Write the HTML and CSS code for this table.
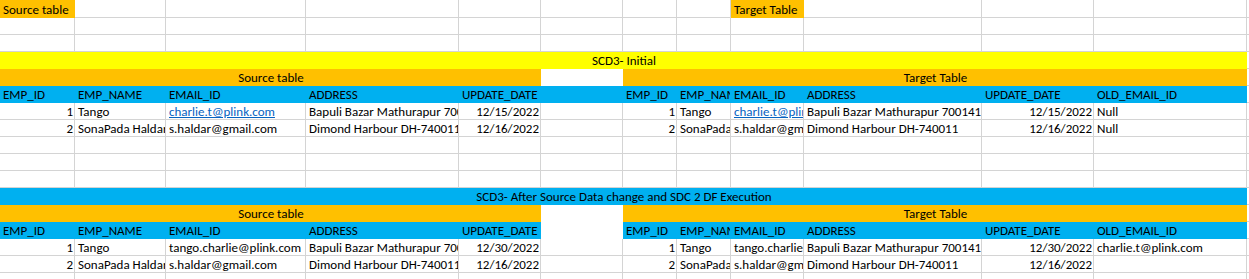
FILE: index.html
```html
<!DOCTYPE html>
<html lang="en">
<head>
<meta charset="utf-8">
<title>SCD3 sheet</title>
<link rel="stylesheet" href="styles.css">
</head>
<body>
<div class="sheet">
  <!-- row 1 -->
  <div class="c or">Source table</div><div class="c"></div><div class="c"></div><div class="c"></div><div class="c"></div><div class="c"></div><div class="c"></div><div class="c"></div>
  <div class="c or">Target Table</div><div class="c"></div><div class="c"></div><div class="c"></div><div class="c"></div>
  <!-- row 2 -->
  <div class="c"></div><div class="c"></div><div class="c"></div><div class="c"></div><div class="c"></div><div class="c"></div><div class="c"></div><div class="c"></div><div class="c"></div><div class="c"></div><div class="c"></div><div class="c"></div><div class="c"></div>
  <!-- row 3 -->
  <div class="c"></div><div class="c"></div><div class="c"></div><div class="c"></div><div class="c"></div><div class="c"></div><div class="c"></div><div class="c"></div><div class="c"></div><div class="c"></div><div class="c"></div><div class="c"></div><div class="c"></div>
  <!-- row 4 -->
  <div class="c ye span12 ctr">SCD3- Initial</div><div class="c"></div>
  <!-- row 5 -->
  <div class="c or span5 ctr">Source table</div><div class="c wf"></div><div class="c or span6 ctr">Target Table</div><div class="c"></div>
  <!-- row 6 -->
  <div class="c bl">EMP_ID</div><div class="c bl">EMP_NAME</div><div class="c bl">EMAIL_ID</div><div class="c bl">ADDRESS</div><div class="c bl">UPDATE_DATE</div><div class="c bl"></div>
  <div class="c bl">EMP_ID</div><div class="c bl">EMP_NAME</div><div class="c bl">EMAIL_ID</div><div class="c bl">ADDRESS</div><div class="c bl">UPDATE_DATE</div><div class="c bl">OLD_EMAIL_ID</div><div class="c"></div>
  <!-- row 7 -->
  <div class="c num">1</div><div class="c">Tango</div><div class="c"><span class="link">charlie.t@plink.com</span></div><div class="c">Bapuli Bazar Mathurapur 700141</div><div class="c num">12/15/2022</div><div class="c"></div>
  <div class="c num">1</div><div class="c">Tango</div><div class="c"><span class="link">charlie.t@plink.com</span></div><div class="c">Bapuli Bazar Mathurapur 700141</div><div class="c num">12/15/2022</div><div class="c">Null</div><div class="c"></div>
  <!-- row 8 -->
  <div class="c num">2</div><div class="c">SonaPada Haldar</div><div class="c">s.haldar@gmail.com</div><div class="c">Dimond Harbour DH-740011</div><div class="c num">12/16/2022</div><div class="c"></div>
  <div class="c num">2</div><div class="c">SonaPada Haldar</div><div class="c">s.haldar@gmail.com</div><div class="c">Dimond Harbour DH-740011</div><div class="c num">12/16/2022</div><div class="c">Null</div><div class="c"></div>
  <!-- rows 9-11 -->
  <div class="c"></div><div class="c"></div><div class="c"></div><div class="c"></div><div class="c"></div><div class="c"></div><div class="c"></div><div class="c"></div><div class="c"></div><div class="c"></div><div class="c"></div><div class="c"></div><div class="c"></div>
  <div class="c"></div><div class="c"></div><div class="c"></div><div class="c"></div><div class="c"></div><div class="c"></div><div class="c"></div><div class="c"></div><div class="c"></div><div class="c"></div><div class="c"></div><div class="c"></div><div class="c"></div>
  <div class="c"></div><div class="c"></div><div class="c"></div><div class="c"></div><div class="c"></div><div class="c"></div><div class="c"></div><div class="c"></div><div class="c"></div><div class="c"></div><div class="c"></div><div class="c"></div><div class="c"></div>
  <!-- row 12 -->
  <div class="c bl span12 ctr">SCD3- After Source Data change and SDC 2 DF Execution</div><div class="c"></div>
  <!-- row 13 -->
  <div class="c or span5 ctr">Source table</div><div class="c wf"></div><div class="c or span6 ctr">Target Table</div><div class="c"></div>
  <!-- row 14 -->
  <div class="c bl">EMP_ID</div><div class="c bl">EMP_NAME</div><div class="c bl">EMAIL_ID</div><div class="c bl">ADDRESS</div><div class="c bl">UPDATE_DATE</div><div class="c wf"></div>
  <div class="c bl">EMP_ID</div><div class="c bl">EMP_NAME</div><div class="c bl">EMAIL_ID</div><div class="c bl">ADDRESS</div><div class="c bl">UPDATE_DATE</div><div class="c bl">OLD_EMAIL_ID</div><div class="c"></div>
  <!-- row 15 -->
  <div class="c num">1</div><div class="c">Tango</div><div class="c">tango.charlie@plink.com</div><div class="c">Bapuli Bazar Mathurapur 700141</div><div class="c num">12/30/2022</div><div class="c"></div>
  <div class="c num">1</div><div class="c">Tango</div><div class="c">tango.charlie@plink.com</div><div class="c">Bapuli Bazar Mathurapur 700141</div><div class="c num">12/30/2022</div><div class="c">charlie.t@plink.com</div><div class="c"></div>
  <!-- row 16 -->
  <div class="c num">2</div><div class="c">SonaPada Haldar</div><div class="c">s.haldar@gmail.com</div><div class="c">Dimond Harbour DH-740011</div><div class="c num">12/16/2022</div><div class="c"></div>
  <div class="c num">2</div><div class="c">SonaPada Haldar</div><div class="c">s.haldar@gmail.com</div><div class="c">Dimond Harbour DH-740011</div><div class="c num">12/16/2022</div><div class="c"></div><div class="c"></div>
  <!-- row 17 -->
  <div class="c"></div><div class="c"></div><div class="c"></div><div class="c"></div><div class="c"></div><div class="c"></div><div class="c"></div><div class="c"></div><div class="c"></div><div class="c"></div><div class="c"></div><div class="c"></div><div class="c"></div>
</div>
</body>
</html>
```
FILE: styles.css
```css
html, body {
  margin: 0;
  padding: 0;
  background: #ffffff;
}

.sheet {
  display: grid;
  grid-template-columns: 75px 91px 140px 153px 82px 82px 54px 54px 73px 178px 112px 153px 1fr;
  grid-template-rows: 18px;
  grid-auto-rows: 17px;
  width: 1249px;
  font-family: Carlito, Calibri, Lato, sans-serif;
  font-size: 13px;
  color: #000000;
}

.c {
  box-sizing: border-box;
  border-right: 1px solid #d4d4d4;
  border-bottom: 1px solid #d4d4d4;
  padding: 2px 1px 0 3px;
  line-height: 14px;
  white-space: nowrap;
  overflow: hidden;
  background: #ffffff;
}

.sheet > .c:nth-child(-n+13) {
  padding-top: 3px;
}

.num { text-align: right; }
.ctr { text-align: center; }

.or { background: #ffc000; border-color: #ffc000; }
.ye { background: #ffff00; border-color: #ffff00; }
.bl { background: #00b0f0; border-color: #00b0f0; }
.wf { border-color: #ffffff; }

.span5 { grid-column: span 5; }
.span6 { grid-column: span 6; }
.span12 { grid-column: span 12; }

.link {
  color: #0563c1;
  text-decoration: underline;
}
```
